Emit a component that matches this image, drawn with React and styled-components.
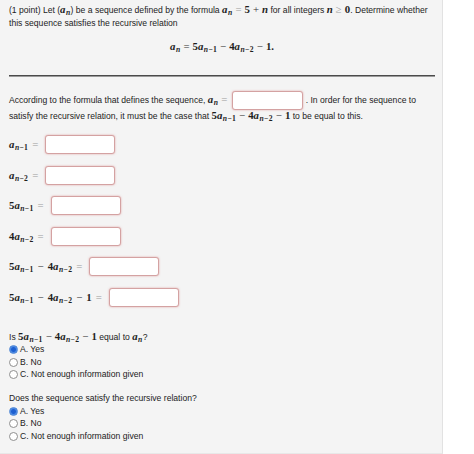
import React from 'react';
import styled, { createGlobalStyle } from 'styled-components';

const Global = createGlobalStyle`
  body {
    margin: 0;
    background: #ffffff;
    font-family: 'Liberation Sans', Arial, sans-serif;
  }
`;

//문제 패널
const Panel = styled.div`
  box-sizing: border-box;
  width: 443px;
  min-height: 450px;
  padding: 3px 7px 10px 9px;
  background: #f4f4f4;
  border-right: 1px solid #e2e2e2;
  border-bottom: 1px solid #e8e8e8;
  color: #222;
  font-size: 8.6px;
  line-height: 13px;
`;

const Para = styled.p`
  margin: 0;
`;

const Display = styled.div`
  margin-top: 9px;
  text-align: center;
  line-height: 14px;
`;

const Rule = styled.hr`
  margin: 21px 0 0 0;
  width: 426px;
  height: 0;
  border: none;
  border-top: 1px solid #4a4a4a;
  border-bottom: 1px solid #9a9a9a;
`;

const Lead = styled.p`
  margin: 15px 0 0 0;
  line-height: 15px;
`;

//수식
const M = styled.span`
  font-family: 'Liberation Serif', 'Times New Roman', serif;
  font-size: 10.8px;
  font-weight: bold;
  color: #1e1e1e;
  white-space: nowrap;
`;

const V = styled.i`
  font-style: italic;
`;

const Sub = styled.sub`
  font-size: 7.6px;
  line-height: 0;
  vertical-align: -2px;
  font-weight: bold;
  margin-left: 0.5px;
  letter-spacing: 0.3px;
`;

const Op = styled.span`
  margin: 0 ${(p) => (p.$wide ? 4 : 3)}px;
  font-weight: normal;
  color: ${(p) => (p.$light ? '#9a9a9a' : '#333')};
`;

const Field = styled.input`
  box-sizing: border-box;
  width: ${(p) => p.$w || 70}px;
  height: 19px;
  margin: ${(p) => (p.$inline ? '-3px 0 -3px 2px' : '0 0 0 3px')};
  padding: 0;
  vertical-align: middle;
  background: #fff;
  border: 1px solid #d4a2a2;
  border-radius: 3px;
  box-shadow: 0 0 2px rgba(205, 90, 90, 0.55);
  outline: none;
`;

const Rows = styled.div`
  display: flex;
  flex-direction: column;
  gap: 11.5px;
  margin-top: 11px;
`;

const Row = styled.div`
  display: flex;
  align-items: center;
  height: 19px;
`;

const Question = styled.div`
  margin-top: ${(p) => p.$top}px;
`;

const Prompt = styled.div`
  line-height: 13px;
`;

const Option = styled.label`
  display: flex;
  align-items: center;
  height: 12.5px;
  gap: 2px;
`;

const Radio = styled.span`
  box-sizing: border-box;
  width: 9px;
  height: 9px;
  border-radius: 50%;
  border: 1px solid ${(p) => (p.$on ? '#4d86d6' : '#8f8f8f')};
  background: ${(p) =>
    p.$on
      ? 'radial-gradient(circle, #1d5fd0 0 2.2px, #3d7fe0 2.3px, #6fa0ea 100%)'
      : '#fff'};
`;

function Var({ v, sub }) {
  return (
    <>
      <V>{v}</V>
      {sub && <Sub>{sub}</Sub>}
    </>
  );
}

const Minus = ({ wide }) => <Op $wide={wide}>−</Op>;

function Combo({ one, wide }) {
  return (
    <>
      5<Var v="a" sub={<><V>n</V>−1</>} />
      <Minus wide={wide} />4<Var v="a" sub={<><V>n</V>−2</>} />
      {one && (
        <>
          <Minus wide={wide} />1
        </>
      )}
    </>
  );
}

function Choices({ picked }) {
  const list = ['A. Yes', 'B. No', 'C. Not enough information given'];
  return list.map((t, i) => (
    <Option key={t}>
      <Radio $on={i === picked} />
      {t}
    </Option>
  ));
}

export default function App() {
  const fields = [
    { label: <Var v="a" sub={<><V>n</V>−1</>} /> },
    { label: <Var v="a" sub={<><V>n</V>−2</>} /> },
    { label: <>5<Var v="a" sub={<><V>n</V>−1</>} /></> },
    { label: <>4<Var v="a" sub={<><V>n</V>−2</>} /></> },
    { label: <Combo wide /> },
    { label: <Combo one wide /> },
  ];

  return (
    <>
      <Global />
      <Panel>
        <Para>
          (1 point) Let (<M><Var v="a" sub={<V>n</V>} /></M>) be a sequence
          defined by the formula{' '}
          <M>
            <Var v="a" sub={<V>n</V>} />
            <Op $light>=</Op>5<Op>+</Op>
            <V>n</V>
          </M>{' '}
          for all integers{' '}
          <M>
            <V>n</V>
            <Op $light>≥</Op>0
          </M>
          . Determine whether this sequence satisfies the recursive relation
        </Para>
        <Display>
          <M>
            <Var v="a" sub={<V>n</V>} />
            <Op>=</Op>
            <Combo one />.
          </M>
        </Display>
        <Rule />
        <Lead>
          According to the formula that defines the sequence,{' '}
          <M>
            <Var v="a" sub={<V>n</V>} />
            <Op $light>=</Op>
          </M>
          <Field $inline $w={71} /> . In order for the sequence to satisfy the
          recursive relation, it must be the case that{' '}
          <M>
            <Combo one />
          </M>{' '}
          to be equal to this.
        </Lead>
        <Rows>
          {fields.map((f, i) => (
            <Row key={i}>
              <M>
                {f.label}
                <Op $light $wide>=</Op>
              </M>
              <Field />
            </Row>
          ))}
        </Rows>
        <Question $top={23}>
          <Prompt>
            Is{' '}
            <M>
              <Combo one />
            </M>{' '}
            equal to{' '}
            <M>
              <Var v="a" sub={<V>n</V>} />
            </M>
            ?
          </Prompt>
          <Choices picked={0} />
        </Question>
        <Question $top={11}>
          <Prompt>Does the sequence satisfy the recursive relation?</Prompt>
          <Choices picked={0} />
        </Question>
      </Panel>
    </>
  );
}
